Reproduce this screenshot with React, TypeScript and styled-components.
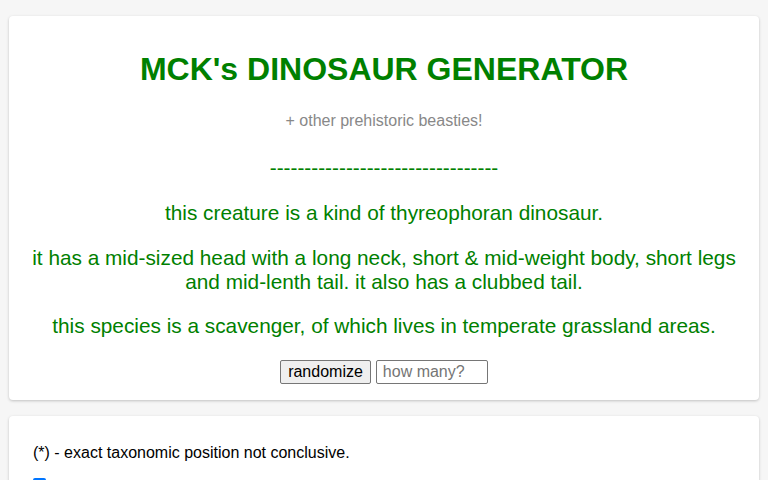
import styled, { createGlobalStyle } from "styled-components";

const GlobalStyle = createGlobalStyle`
  html, body {
    margin: 0;
    padding: 0;
    background: #f6f6f6;
    font-family: "Liberation Sans", Arial, sans-serif;
  }
`;

const Page = styled.div`
  display: flex;
  flex-direction: column;
  align-items: center;
  gap: 16px;
  padding-top: 16px;
`;

const Card = styled.div<{ $pad: string }>`
  width: 750px;
  box-sizing: border-box;
  background: #fff;
  border-radius: 4px;
  box-shadow: 0 1px 3px rgba(0, 0, 0, 0.22);
  padding: ${(p) => p.$pad};
`;

const Generator = styled.div`
  display: flex;
  flex-direction: column;
  align-items: center;
  text-align: center;
  color: #008000;
`;

const Title = styled.h1`
  font-size: 32px;
  line-height: 37px;
  font-weight: bold;
  margin: 0;
`;

const Subtitle = styled.p`
  font-size: 16px;
  line-height: 18px;
  color: #888;
  margin: 24px 0 0;
`;

const Line = styled.p<{ $gap: number }>`
  font-size: 20.8px;
  line-height: 24px;
  margin: ${(p) => p.$gap}px 0 0;
`;

const Controls = styled.div`
  display: flex;
  align-items: center;
  gap: 5px;
  margin-top: 22px;
`;

const Button = styled.button`
  font-family: "Liberation Sans", Arial, sans-serif;
  font-size: 16px;
  height: 24px;
  padding: 0 7px;
  color: #000;
  background: #efefef;
  border: 1px solid #767676;
  border-radius: 2px;
`;

const Input = styled.input`
  font-family: "Liberation Sans", Arial, sans-serif;
  font-size: 16px;
  width: 112px;
  height: 24px;
  box-sizing: border-box;
  padding: 1px 6px;
  border: 1px solid #767676;
  border-radius: 2px;

  &::placeholder {
    color: #757575;
  }
`;

const Note = styled.p`
  font-size: 16px;
  line-height: 18px;
  color: #000;
  margin: 0;
`;

const Check = styled.label`
  display: flex;
  align-items: flex-start;
  gap: 6px;
  margin-top: 16px;
  font-size: 16px;

  input {
    margin: 0;
    width: 13px;
    height: 13px;
  }
`;

export default function App() {
  return (
    <>
      <GlobalStyle />
      <Page>
        <Card $pad="35px 16px 16px">
          <Generator>
            <Title>MCK's DINOSAUR GENERATOR</Title>
            <Subtitle>+ other prehistoric beasties!</Subtitle>
            <Line $gap={26}>---------------------------------</Line>
            <Line $gap={21}>this creature is a kind of thyreophoran dinosaur.</Line>
            <Line $gap={21}>
              it has a mid-sized head with a long neck, short &amp; mid-weight body, short legs
              and mid-lenth tail. it also has a clubbed tail.
            </Line>
            <Line $gap={20}>
              this species is a scavenger, of which lives in temperate grassland areas.
            </Line>
            <Controls>
              <Button>randomize</Button>
              <Input placeholder="how many?" />
            </Controls>
          </Generator>
        </Card>
        <Card $pad="28px 24px 24px">
          <Note>(*) - exact taxonomic position not conclusive.</Note>
          <Check>
            <input type="checkbox" defaultChecked />
          </Check>
        </Card>
      </Page>
    </>
  );
}
